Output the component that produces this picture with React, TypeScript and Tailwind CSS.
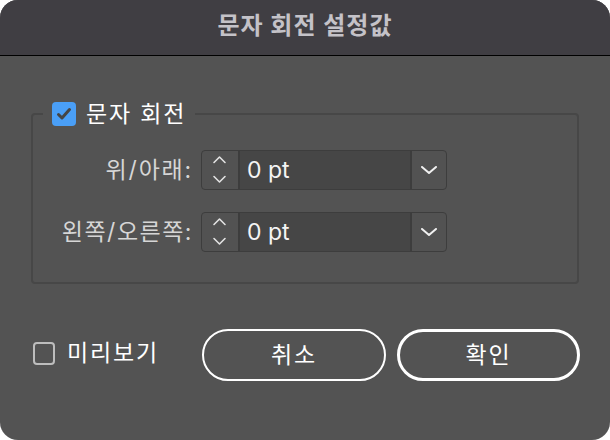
import { useState } from "react";

const FONT = { fontFamily: 'Inter, "Noto Sans CJK KR", sans-serif' };

function Stepper() {
    return (
        <svg width="36" height="38" viewBox="0 0 36 38" className="shrink-0">
            <path d="M12 11.5 L17.5 6 L23 11.5" fill="none" stroke="#e2e2e2" strokeWidth="1.6" strokeLinecap="round" strokeLinejoin="round" />
            <path d="M12 25.5 L17.5 31 L23 25.5" fill="none" stroke="#e2e2e2" strokeWidth="1.6" strokeLinecap="round" strokeLinejoin="round" />
        </svg>
    );
}

function NumberField({ value }: { value: string }) {
    return (
        <div className="flex h-[40px] w-[246px] rounded-[4px] border border-[#3d3d3d] bg-[#525252] overflow-hidden">
            <Stepper />
            <div className="flex flex-1 items-center border-l-2 border-r-2 border-[#3d3d3d] bg-[#464646] pl-[7px] text-[23px] text-[#f4f4f4]">
                {value}
            </div>
            <div className="flex w-[34px] items-center justify-center">
                <svg width="16" height="8" viewBox="0 0 16 8">
                    <path d="M1 1 L8 7 L15 1" fill="none" stroke="#f0f0f0" strokeWidth="2" strokeLinecap="round" strokeLinejoin="round" />
                </svg>
            </div>
        </div>
    );
}

export default function App() {
    const [rotate, setRotate] = useState(true);
    const [preview, setPreview] = useState(false);

    return (
        <div className="w-[610px] h-[440px] bg-white" style={FONT}>
            <div className="flex h-full flex-col overflow-hidden rounded-[18px] bg-[#535353] shadow-[inset_0_1px_0_#77767b]">
                {/* Title bar */}
                <div className="flex h-[56px] shrink-0 items-center justify-center border-b border-black bg-[#403e43] pb-[3px]">
                    <span className="text-[24px] font-bold tracking-[1px] text-[#c4c2c8]">문자 회전 설정값</span>
                </div>

                {/* Rotation group */}
                <fieldset className="mx-[31px] mt-[46px] rounded-[4px] border-2 border-[#474747] pb-[30px] pt-[24px]">
                    <legend className="ml-[10px] flex items-center gap-[10px] px-[9px]">
                        <button
                            onClick={() => setRotate(!rotate)}
                            className={`flex h-[24px] w-[24px] items-center justify-center rounded-[4px] ${rotate ? "bg-[#4a9ff7]" : "border-2 border-[#bdbdbd]"}`}
                        >
                            {rotate && (
                                <svg width="16" height="14" viewBox="0 0 16 14">
                                    <path d="M2.5 7.5 L6 11 L13.5 2.5" fill="none" stroke="#454545" strokeWidth="3" strokeLinecap="round" strokeLinejoin="round" />
                                </svg>
                            )}
                        </button>
                        <span className="text-[23px] leading-[24px] tracking-[1.8px] text-white">문자 회전</span>
                    </legend>

                    <div className="flex flex-col gap-[22px]">
                        <div className="flex items-center">
                            <span className="w-[168px] pr-[8px] text-right text-[23px] tracking-[1.8px] text-[#d6d6d6]">위/아래:</span>
                            <NumberField value="0 pt" />
                        </div>
                        <div className="flex items-center">
                            <span className="w-[168px] pr-[8px] text-right text-[23px] tracking-[1.5px] text-[#d6d6d6]">왼쪽/오른쪽:</span>
                            <NumberField value="0 pt" />
                        </div>
                    </div>
                </fieldset>

                {/* Bottom row */}
                <div className="mt-[45px] flex items-center pl-[33px] pr-[30px]">
                    <button onClick={() => setPreview(!preview)} className="flex items-center gap-[12px] pb-[4px]">
                        <span className={`h-[23px] w-[22px] rounded-[4px] border-2 ${preview ? "border-[#4a9ff7] bg-[#4a9ff7]" : "border-[#bdbdbd]"}`} />
                        <span className="text-[23px] tracking-[1.8px] text-white">미리보기</span>
                    </button>
                    <div className="ml-auto flex gap-[11px]">
                        <button className="h-[52px] w-[184px] rounded-full border-2 border-white text-[23px] tracking-[1.8px] text-white">취소</button>
                        <button className="h-[52px] w-[183px] rounded-full border-[3.5px] border-white text-[23px] tracking-[1.8px] text-white">확인</button>
                    </div>
                </div>
            </div>
        </div>
    );
}
